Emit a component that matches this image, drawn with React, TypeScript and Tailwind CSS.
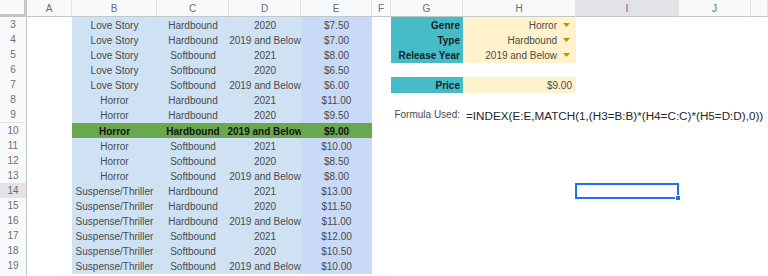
const GRID =
  'grid grid-cols-[27px_45px_85px_72px_72px_71px_19px_72px_113px_103px_72px_1fr]';

const books: [string, string, string, string][] = [
  ['Love Story', 'Hardbound', '2020', '$7.50'],
  ['Love Story', 'Hardbound', '2019 and Below', '$7.00'],
  ['Love Story', 'Softbound', '2021', '$8.00'],
  ['Love Story', 'Softbound', '2020', '$6.50'],
  ['Love Story', 'Softbound', '2019 and Below', '$6.00'],
  ['Horror', 'Hardbound', '2021', '$11.00'],
  ['Horror', 'Hardbound', '2020', '$9.50'],
  ['Horror', 'Hardbound', '2019 and Below', '$9.00'],
  ['Horror', 'Softbound', '2021', '$10.00'],
  ['Horror', 'Softbound', '2020', '$8.50'],
  ['Horror', 'Softbound', '2019 and Below', '$8.00'],
  ['Suspense/Thriller', 'Hardbound', '2021', '$13.00'],
  ['Suspense/Thriller', 'Hardbound', '2020', '$11.50'],
  ['Suspense/Thriller', 'Hardbound', '2019 and Below', '$11.00'],
  ['Suspense/Thriller', 'Softbound', '2021', '$12.00'],
  ['Suspense/Thriller', 'Softbound', '2020', '$10.50'],
  ['Suspense/Thriller', 'Softbound', '2019 and Below', '$10.00'],
];

// lookup panel in G:H, keyed by row number
const lookup: Record<number, { label: string; value: string; dropdown: boolean }> = {
  3: { label: 'Genre', value: 'Horror', dropdown: true },
  4: { label: 'Type', value: 'Hardbound', dropdown: true },
  5: { label: 'Release Year', value: '2019 and Below', dropdown: true },
  7: { label: 'Price', value: '$9.00', dropdown: false },
};

const HIT_ROW = 10;
const FORMULA_ROW = 9;
const SELECTED_ROW = 14;

function Caret() {
  return (
    <svg width="7" height="4" viewBox="0 0 7 4" className="ml-[6px] shrink-0">
      <path d="M0 0h7L3.5 4z" fill="#bf9000" />
    </svg>
  );
}

function ColumnHeader() {
  const letters = ['A', 'B', 'C', 'D', 'E', 'F', 'G', 'H', 'I', 'J', ''];
  return (
    <div className={`${GRID} h-[17px] text-[10px] text-[#6b6f73]`}>
      <div className="bg-[#f8f9fa] border-r-[3px] border-b-[3px] border-[#c4c7ca]" />
      {letters.map((l) => (
        <div
          key={l || 'K'}
          className={`flex items-center justify-center border-r border-b border-r-[#e1e3e5] border-b-[#c4c7ca] ${
            l === 'I' ? 'bg-[#e1e3e6]' : 'bg-[#f8f9fa]'
          }`}
        >
          {l}
        </div>
      ))}
    </div>
  );
}

function DataRow({ n, book }: { n: number; book: [string, string, string, string] }) {
  const hit = n === HIT_ROW;
  const tall = n === FORMULA_ROW;
  const info = lookup[n];
  const blue = hit ? 'bg-[#6aa84f]' : 'bg-[#cfe2f3]';
  const text = hit ? 'font-bold text-[#141414]' : 'text-[#4a4a4a]';

  return (
    <div className={`${GRID} ${tall ? 'h-[16px]' : 'h-[15px]'} text-[10px]`}>
      <div
        className={`flex items-center justify-center border-r border-b border-r-[#c4c7ca] border-b-[#e1e3e5] text-[#6b6f73] ${
          n === SELECTED_ROW ? 'bg-[#e1e3e6]' : 'bg-[#f8f9fa]'
        }`}
      >
        {n}
      </div>
      <div />
      <div className={`flex items-center justify-center whitespace-nowrap ${blue} ${text}`}>{book[0]}</div>
      <div className={`flex items-center justify-center whitespace-nowrap ${blue} ${text}`}>{book[1]}</div>
      <div className={`flex items-center justify-center whitespace-nowrap ${blue} ${text}`}>{book[2]}</div>
      <div
        className={`flex items-center justify-center whitespace-nowrap ${hit ? 'bg-[#6aa84f]' : 'bg-[#c9daf8]'} ${text}`}
      >
        {book[3]}
      </div>
      <div />
      {info ? (
        <>
          <div className="flex items-center justify-end pr-[3px] bg-[#46bdc6] font-bold text-[#1c1c1c] whitespace-nowrap">
            {info.label}
          </div>
          <div
            className={`flex items-center justify-end bg-[#fff2cc] text-[#4a4a4a] whitespace-nowrap ${
              info.dropdown ? 'pr-[6px]' : 'pr-[4px]'
            }`}
          >
            {info.value}
            {info.dropdown && <Caret />}
          </div>
        </>
      ) : tall ? (
        <>
          <div className="flex items-end justify-end pr-[3px] pb-[1px] text-[#4a4a4a] whitespace-nowrap">
            Formula Used:
          </div>
          <div className="relative">
            <span className="absolute left-[3px] bottom-[0px] whitespace-nowrap text-[11.7px] leading-[15px] text-[#262626]">
              =INDEX(E:E,MATCH(1,(H3=B:B)*(H4=C:C)*(H5=D:D),0))
            </span>
          </div>
        </>
      ) : (
        <>
          <div />
          <div />
        </>
      )}
      <div className="relative">
        {n === SELECTED_ROW && (
          <div className="absolute left-[-1px] top-0 w-[104px] h-[16px] border-2 border-[#1a73e8]">
            <div className="absolute right-[-4px] bottom-[-4px] w-[6px] h-[6px] bg-[#1a73e8] border border-white" />
          </div>
        )}
      </div>
      <div />
      <div />
    </div>
  );
}

export default function App() {
  return (
    <div className="w-[768px] h-[276px] overflow-hidden bg-white font-['Liberation_Sans',Arial,sans-serif]">
      <ColumnHeader />
      {books.map((book, i) => (
        <DataRow key={i} n={i + 3} book={book} />
      ))}
      <div className={`${GRID} h-[15px]`}>
        <div className="bg-[#f8f9fa] border-r border-r-[#c4c7ca]" />
      </div>
    </div>
  );
}
